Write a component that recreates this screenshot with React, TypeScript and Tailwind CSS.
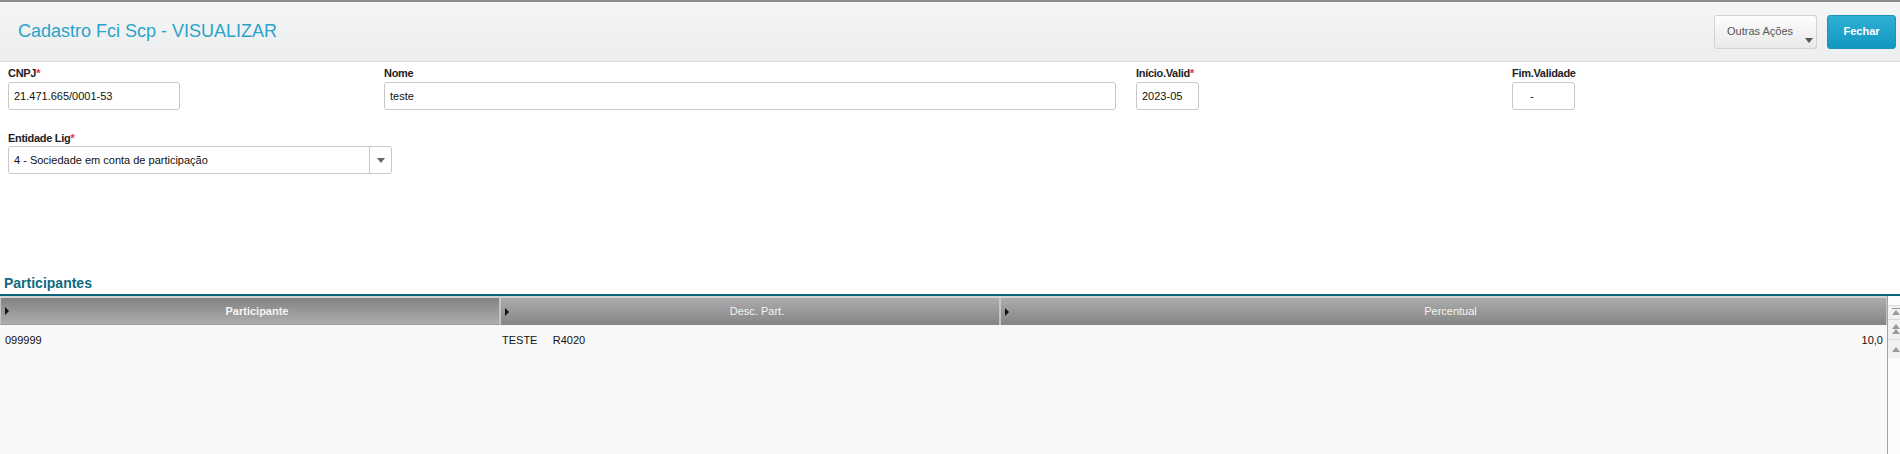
import React from "react";

const Label = ({ text, req }: { text: string; req?: boolean }) => (
  <div className="h-[14px] leading-[14px] text-[11px] font-bold tracking-[-0.3px] text-[#222] whitespace-nowrap">
    {text}
    {req && <span className="text-[#f0284a]">*</span>}
  </div>
);

const Input = ({ value, w, pl = "pl-[5px]" }: { value: string; w: string; pl?: string }) => (
  <div
    className={`mt-[2px] h-[28px] ${w} ${pl} flex items-center rounded-[3px] border border-[#c8c8c8] bg-white text-[11px] text-[#111]`}
  >
    {value}
  </div>
);

const Tri = ({ color = "#111" }: { color?: string }) => (
  <span
    className="inline-block mr-[7px] w-0 h-0 border-y-[4px] border-y-transparent border-l-[4px]"
    style={{ borderLeftColor: color }}
  />
);

const UpTri = () => (
  <span className="block w-0 h-0 border-x-[4px] border-x-transparent border-b-[5px] border-b-[#9a9a9a]" />
);

export default function App() {
  return (
    <div
      className="w-[1900px] h-[454px] bg-white flex flex-col overflow-hidden"
      style={{ fontFamily: '"Liberation Sans", Arial, sans-serif' }}
    >
      {/* Header */}
      <div className="h-[62px] shrink-0 border-t-2 border-b border-t-[#8c8c8c] border-b-[#d9d9d9] bg-linear-to-b from-[#f5f5f5] to-[#eceeef] flex items-center justify-between">
        <div className="pl-[18px] text-[18px] text-[#2aa3cb]">Cadastro Fci Scp - VISUALIZAR</div>
        <div className="flex items-center">
          <div className="w-[103px] h-[34px] flex rounded-[3px] border border-[#d2d2d2] bg-linear-to-b from-[#fdfdfd] to-[#e9e9e9]">
            <span className="pl-[12px] self-center text-[11px] text-[#555]">Outras Ações</span>
            <span className="ml-auto mr-[3px] mb-[5px] self-end w-0 h-0 border-x-[4px] border-x-transparent border-t-[5px] border-t-[#555]" />
          </div>
          <div className="ml-[10px] mr-[4px] w-[69px] h-[34px] flex items-center justify-center rounded-[3px] border border-[#1a93b8] bg-linear-to-b from-[#2eaed3] to-[#0e98c1] text-[11px] font-bold text-white">
            Fechar
          </div>
        </div>
      </div>

      {/* Form */}
      <div className="pt-[4px] pl-[8px]">
        <div className="flex">
          <div className="w-[376px]">
            <Label text="CNPJ" req />
            <Input value="21.471.665/0001-53" w="w-[172px]" />
          </div>
          <div className="w-[752px]">
            <Label text="Nome" />
            <Input value="teste" w="w-[732px]" />
          </div>
          <div className="w-[376px]">
            <Label text="Início.Valid" req />
            <Input value="2023-05" w="w-[63px]" />
          </div>
          <div>
            <Label text="Fim.Validade" />
            <Input value="-" w="w-[63px]" pl="pl-[17px]" />
          </div>
        </div>
        <div className="mt-[21px]">
          <Label text="Entidade Lig" req />
          <div className="mt-[1px] w-[384px] h-[28px] flex rounded-[3px] border border-[#c8c8c8] bg-white">
            <div className="flex-1 flex items-center pl-[5px] text-[11px] text-[#111]">
              4 - Sociedade em conta de participação
            </div>
            <div className="w-[22px] border-l border-[#c8c8c8] flex items-center justify-center">
              <span className="w-0 h-0 border-x-[4px] border-x-transparent border-t-[5px] border-t-[#666]" />
            </div>
          </div>
        </div>
      </div>

      {/* Participantes */}
      <div className="mt-[101px] pl-[4px] pb-[3px] border-b-2 border-[#0b6478]">
        <div className="text-[14px] leading-[16px] font-bold text-[#0f6b80]">Participantes</div>
      </div>

      {/* Grid */}
      <div className="flex-1 flex min-h-0">
        <div className="w-[1888px] flex flex-col border-r border-[#a2a2a2]">
          <div className="h-[29px] flex border-t-[2px] border-[#d3d3d3]">
            <div className="w-[500px] flex items-center pl-[4px] border-r border-l border-[#c4c4c4] border-b border-b-[#9b9b9b] bg-linear-to-b from-[#838383] to-[#adadad]">
              <Tri />
              <span className="flex-1 text-center text-[11px] font-bold text-[#f4f4f4]">Participante</span>
              <span className="w-[1px]" />
            </div>
            <div className="w-[500px] flex items-center pl-[4px] border-x border-[#c4c4c4] bg-linear-to-b from-[#acacac] to-[#858585]">
              <Tri />
              <span className="flex-1 text-center text-[11px] text-[#f4f4f4]">Desc. Part.</span>
              <span className="w-[1px]" />
            </div>
            <div className="flex-1 flex items-center pl-[4px] border-x border-[#c4c4c4] bg-linear-to-b from-[#acacac] to-[#858585]">
              <Tri />
              <span className="flex-1 text-center text-[11px] text-[#f4f4f4]">Percentual</span>
              <span className="w-[1px]" />
            </div>
          </div>
          <div className="flex-1 bg-[#f8f8f8]">
            <div className="h-[30px] flex items-center text-[11px] text-[#111]">
              <div className="w-[500px] pl-[5px]">099999</div>
              <div className="w-[500px] pl-[2px] whitespace-pre">{"TESTE     R4020"}</div>
              <div className="flex-1 text-right pr-[4px]">10,0</div>
            </div>
          </div>
        </div>
        <div className="w-[12px] pt-[9px] flex flex-col bg-[#fbfbfb] overflow-hidden">
          <div className="h-[14px] border-t border-[#d8d8d8] bg-[#f1f1f1] pl-[4px] pt-[2px] flex flex-col">
            <span className="block w-[9px] h-[1px] bg-[#9a9a9a] mb-[1px]" />
            <UpTri />
          </div>
          <div className="h-[20px] border-t border-[#d8d8d8] bg-[#f1f1f1] pl-[4px] pt-[4px] flex flex-col">
            <UpTri />
            <UpTri />
          </div>
          <div className="h-[19px] border-t border-[#d8d8d8] bg-[#f1f1f1] pl-[4px] pt-[7px] flex flex-col">
            <UpTri />
          </div>
        </div>
      </div>
    </div>
  );
}
